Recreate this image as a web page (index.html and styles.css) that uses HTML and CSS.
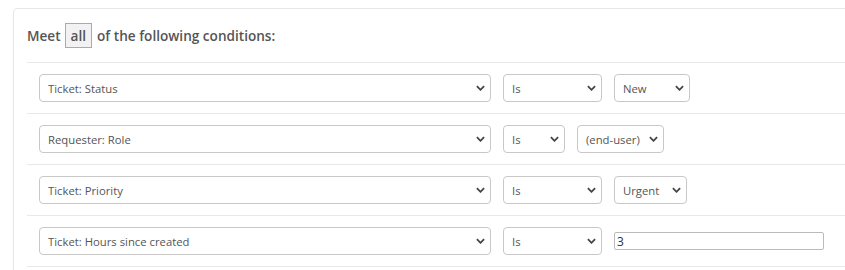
FILE: index.html
```html
<!DOCTYPE html>
<html>
<head>
<meta charset="utf-8">
<link rel="stylesheet" href="styles.css">
</head>
<body>
<div class="card">
  <div class="head">
    <span>Meet</span>
    <span class="all">all</span>
    <span>of the following conditions:</span>
  </div>
  <div class="row">
    <span class="sel w-field"><select><option>Ticket: Status</option></select><svg class="chev" viewBox="0 0 10 6"><path d="M1 1l4 4 4-4"/></svg></span>
    <span class="sel w-op"><select><option>Is</option></select><svg class="chev" viewBox="0 0 10 6"><path d="M1 1l4 4 4-4"/></svg></span>
    <span class="sel w-new"><select><option>New</option></select><svg class="chev" viewBox="0 0 10 6"><path d="M1 1l4 4 4-4"/></svg></span>
  </div>
  <div class="row">
    <span class="sel w-field"><select><option>Requester: Role</option></select><svg class="chev" viewBox="0 0 10 6"><path d="M1 1l4 4 4-4"/></svg></span>
    <span class="sel w-op-s"><select><option>Is</option></select><svg class="chev" viewBox="0 0 10 6"><path d="M1 1l4 4 4-4"/></svg></span>
    <span class="sel w-role"><select><option>(end-user)</option></select><svg class="chev" viewBox="0 0 10 6"><path d="M1 1l4 4 4-4"/></svg></span>
  </div>
  <div class="row">
    <span class="sel w-field"><select><option>Ticket: Priority</option></select><svg class="chev" viewBox="0 0 10 6"><path d="M1 1l4 4 4-4"/></svg></span>
    <span class="sel w-op"><select><option>Is</option></select><svg class="chev" viewBox="0 0 10 6"><path d="M1 1l4 4 4-4"/></svg></span>
    <span class="sel w-urgent"><select><option>Urgent</option></select><svg class="chev" viewBox="0 0 10 6"><path d="M1 1l4 4 4-4"/></svg></span>
  </div>
  <div class="row">
    <span class="sel w-field"><select><option>Ticket: Hours since created</option></select><svg class="chev" viewBox="0 0 10 6"><path d="M1 1l4 4 4-4"/></svg></span>
    <span class="sel w-op"><select><option>Is</option></select><svg class="chev" viewBox="0 0 10 6"><path d="M1 1l4 4 4-4"/></svg></span>
    <input class="num" type="text" value="3">
  </div>
</div>
</body>
</html>
```
FILE: styles.css
```css
html, body {
  margin: 0;
  padding: 0;
  background: #fff;
  overflow: hidden;
}
body {
  font-family: "Open Sans", "Noto Sans", sans-serif;
  color: #555;
}
.card {
  margin: 8px 0 0 13px;
  width: 900px;
  border: 1px solid #e6e6e6;
  border-radius: 4px;
  padding-left: 13px;
  height: 400px;
}
.head {
  height: 53px;
  display: flex;
  align-items: center;
  font-size: 13.6px;
  font-weight: 600;
  color: #555;
}
.head {
  border-bottom: 1px solid #e8e8e8;
}
.all {
  display: inline-block;
  box-sizing: border-box;
  height: 25px;
  line-height: 23px;
  margin: 0 5px 0 4px;
  padding: 0 5px;
  background: #f2f2f2;
  border: 1px solid #aaa;
  font-weight: 600;
}
.row {
  height: 50px;
  border-bottom: 1px solid #e8e8e8;
  padding-left: 12px;
  display: flex;
  align-items: center;
  gap: 12px;
}
.sel {
  position: relative;
  display: block;
  height: 28px;
}
.sel select {
  appearance: none;
  -webkit-appearance: none;
  width: 100%;
  height: 28px;
  margin: 0;
  border: 1px solid #c8c8c8;
  border-radius: 4px;
  background: #fff;
  padding: 0 0 0 8px;
  font-family: "Open Sans", "Noto Sans", sans-serif;
  font-size: 11.3px;
  color: #555;
}
.chev {
  position: absolute;
  right: 6px;
  top: 11px;
  width: 9px;
  height: 6px;
  fill: none;
  stroke: #444;
  stroke-width: 2;
}
.w-field { width: 452px; }
.w-op { width: 99px; }
.w-op-s { width: 62px; }
.w-new { width: 76px; }
.w-role { width: 87px; }
.w-urgent { width: 73px; }
.num {
  box-sizing: border-box;
  width: 210px;
  height: 18px;
  margin: 0;
  border: 1px solid #bbb;
  border-radius: 2px;
  padding: 0 2px;
  font-family: "Open Sans", "Noto Sans", sans-serif;
  font-size: 12px;
  color: #333;
}
```
